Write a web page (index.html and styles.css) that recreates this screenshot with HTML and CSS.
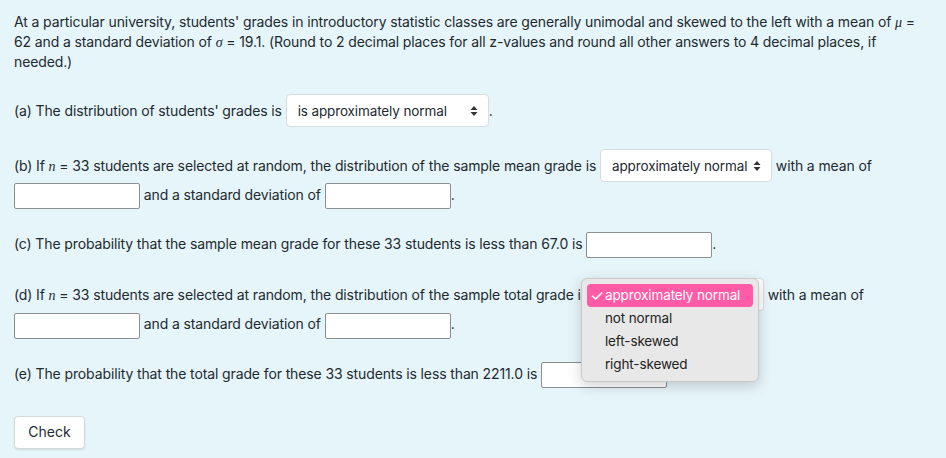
FILE: index.html
```html
<!DOCTYPE html>
<html lang="en">
<head>
  <meta charset="UTF-8" />
  <title>Sampling Distributions</title>
  <link rel="stylesheet" href="styles.css">
</head>
<body>
  <div class="question">
    <p class="intro">At a particular university, students' grades in introductory statistic classes are generally unimodal and skewed to the left with a mean of <i class="math">μ</i> = 62 and a standard deviation of <i class="math">σ</i> = 19.1. (Round to 2 decimal places for all z-values and round all other answers to 4 decimal places, if needed.)</p>

    <p class="part">(a) The distribution of students' grades is <span class="select-box sel-a">is approximately normal<svg class="arrows" viewBox="0 0 8 12" width="8" height="12"><path d="M4 1 L7.5 5 H0.5 Z M4 11 L7.5 7 H0.5 Z"/></svg></span>.</p>

    <p class="part">(b) If <i class="math">n</i> = 33 students are selected at random, the distribution of the sample mean grade is <span class="select-box sel-b">approximately normal<svg class="arrows" viewBox="0 0 8 12" width="8" height="12"><path d="M4 1 L7.5 5 H0.5 Z M4 11 L7.5 7 H0.5 Z"/></svg></span> with a mean of <input class="answer" type="text"> and a standard deviation of <input class="answer" type="text">.</p>

    <p class="part tight">(c) The probability that the sample mean grade for these 33 students is less than 67.0 is <input class="answer" type="text">.</p>

    <p class="part">(d) If <i class="math">n</i> = 33 students are selected at random, the distribution of the sample total grade is <span class="select-box sel-b is-open">approximately normal<svg class="arrows" viewBox="0 0 8 12" width="8" height="12"><path d="M4 1 L7.5 5 H0.5 Z M4 11 L7.5 7 H0.5 Z"/></svg><span class="popup">
        <span class="option selected"><span class="tick">✓</span>approximately normal</span>
        <span class="option">not normal</span>
        <span class="option">left-skewed</span>
        <span class="option">right-skewed</span>
      </span></span> with a mean of <input class="answer" type="text"> and a standard deviation of <input class="answer" type="text">.</p>

    <p class="part">(e) The probability that the total grade for these 33 students is less than 2211.0 is <input class="answer" type="text">.</p>

    <button class="check-btn">Check</button>
  </div>
</body>
</html>
```

FILE: styles.css
```css
/* Page */
* {
  box-sizing: border-box;
}
body {
  margin: 0;
  background: #e6f5fa;
  color: #212a2f;
  font-family: Inter, "Noto Sans", sans-serif;
  font-size: 14px;
  line-height: 20px;
  letter-spacing: -0.12px;
}
.question {
  padding: 12px 14px;
  width: 946px;
}
p {
  margin: 0 0 22px 0;
}
.part {
  line-height: 26px;
}
.part.tight {
  margin-bottom: 20px;
}
.math {
  font-family: "Liberation Serif", serif;
  font-size: 14px;
  line-height: 1;
}

/* Fake select boxes */
.select-box {
  display: inline-flex;
  align-items: center;
  justify-content: space-between;
  height: 33px;
  padding: 0 10px 0 11px;
  background: #fff;
  border: 1px solid #d6dde0;
  border-radius: 4px;
  vertical-align: baseline;
  font-size: 13.5px;
  line-height: 20px;
  white-space: nowrap;
}
.sel-a {
  width: 203px;
}
.sel-b {
  width: 172px;
}
.arrows {
  fill: #333;
  flex: none;
}
.is-open {
  position: relative;
}

/* Text inputs */
.answer {
  width: 126px;
  height: 26px;
  margin: 0;
  padding: 0 4px;
  background: #fff;
  border: 1px solid #8a8f92;
  border-radius: 2px;
  vertical-align: middle;
  font: inherit;
}

/* Open dropdown menu */
.popup {
  position: absolute;
  left: -12px;
  top: -1px;
  z-index: 10;
  width: 178px;
  padding: 5px;
  background: #e8e8e8;
  border: 1px solid #c9c9c9;
  border-radius: 6px;
  box-shadow: 0 4px 14px rgba(0, 0, 0, 0.18);
}
.option {
  display: block;
  height: 23px;
  line-height: 23px;
  padding-left: 18px;
  color: #222;
}
.option.selected {
  position: relative;
  background: #ff5ba6;
  color: #fff;
  border-radius: 4px;
}
.tick {
  position: absolute;
  left: 3px;
  font-size: 16px;
}

/* Button */
.check-btn {
  margin-top: 6px;
  width: 71px;
  height: 33px;
  background: #fff;
  border: 1px solid #d3d8da;
  border-radius: 4px;
  box-shadow: 0 1px 2px rgba(0, 0, 0, 0.1);
  color: #212a2f;
  font: inherit;
}
```
